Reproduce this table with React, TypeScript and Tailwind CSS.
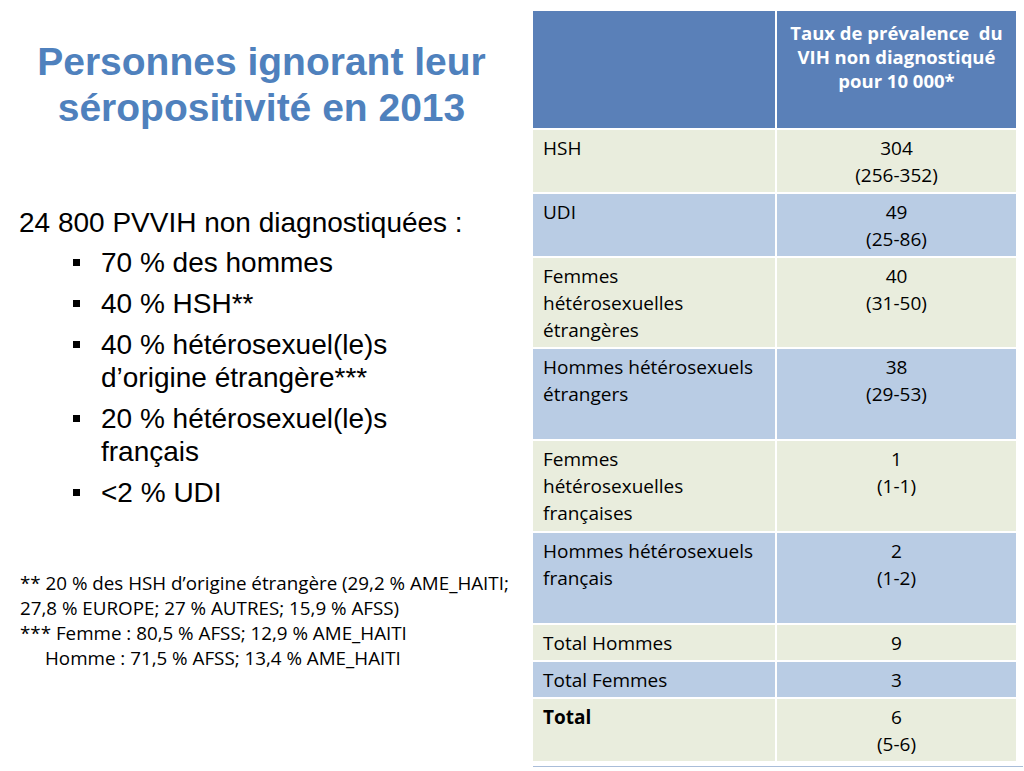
const rows = [
  { label: ['HSH'], value: ['304', '(256-352)'], bg: 'bg-[#e9eddd]', h: 'h-[62px]' },
  { label: ['UDI'], value: ['49', '(25-86)'], bg: 'bg-[#b9cce4]', h: 'h-[62px]' },
  { label: ['Femmes', 'hétérosexuelles', 'étrangères'], value: ['40', '(31-50)'], bg: 'bg-[#e9eddd]', h: 'h-[89px]' },
  { label: ['Hommes hétérosexuels', 'étrangers'], value: ['38', '(29-53)'], bg: 'bg-[#b9cce4]', h: 'h-[90px]' },
  { label: ['Femmes', 'hétérosexuelles', 'françaises'], value: ['1', '(1-1)'], bg: 'bg-[#e9eddd]', h: 'h-[90px]' },
  { label: ['Hommes hétérosexuels', 'français'], value: ['2', '(1-2)'], bg: 'bg-[#b9cce4]', h: 'h-[90px]' },
  { label: ['Total Hommes'], value: ['9'], bg: 'bg-[#e9eddd]', h: 'h-[35px]' },
  { label: ['Total Femmes'], value: ['3'], bg: 'bg-[#b9cce4]', h: 'h-[35px]' },
  { label: ['Total'], value: ['6', '(5-6)'], bg: 'bg-[#e9eddd]', h: 'h-[62px]', bold: true },
]

const bullets = [
  ['70 % des hommes'],
  ['40 % HSH**'],
  ['40 % hétérosexuel(le)s', 'd’origine étrangère***'],
  ['20 % hétérosexuel(le)s', 'français'],
  ['<2 % UDI'],
]

export default function App() {
  return (
    <div className="w-[1024px] h-[771px] bg-white flex overflow-hidden">
      {/* Left side */}
      <div className="w-[533px] flex flex-col font-['Liberation_Sans',Arial,sans-serif] text-black">
        <h1 className="mt-[39px] pr-[10px] text-center text-[39px] leading-[46px] font-bold text-[#4f81bd]">
          Personnes ignorant leur
          <br />
          séropositivité en 2013
        </h1>

        <p className="mt-[75px] ml-[19px] text-[28px] leading-[33px]">24 800 PVVIH non diagnostiquées :</p>
        <ul className="mt-[7px] ml-[73px] flex flex-col gap-[8px]">
          {bullets.map((b, i) => (
            <li key={i} className="flex text-[28px] leading-[33px]">
              <span className="w-[28px] shrink-0 flex items-center h-[33px]">
                <span className="w-[7px] h-[7px] bg-black" />
              </span>
              <span>
                {b.map((line, j) => (
                  <span key={j} className="block">{line}</span>
                ))}
              </span>
            </li>
          ))}
        </ul>

        <div className="mt-[62px] ml-[20px] font-['Open_Sans',sans-serif] text-[18.8px] leading-[25px]">
          <p>** 20 % des HSH d’origine étrangère (29,2 % AME_HAITI;</p>
          <p>27,8 % EUROPE; 27 % AUTRES; 15,9 % AFSS)</p>
          <p>*** Femme : 80,5 % AFSS; 12,9 % AME_HAITI</p>
          <p className="pl-[25px]">Homme : 71,5 % AFSS; 13,4 % AME_HAITI</p>
        </div>
      </div>

      {/* Table */}
      <div className="flex flex-col pt-[11px] font-['Open_Sans',sans-serif] text-black">
        <div className="grid grid-cols-[242px_239px] gap-[2px] w-[484px]">
          <div className="h-[117px] bg-[#5a80b8]" />
          <div className="h-[117px] bg-[#5a80b8] pt-[10px] text-center text-white font-bold text-[18.5px] leading-[24px]">
            Taux de prévalence&nbsp; du
            <br />
            VIH non diagnostiqué
            <br />
            pour 10 000*
          </div>
          {rows.map((r, i) => (
            <div key={i} className="contents">
              <div className={`${r.h} ${r.bg} pl-[10px] pt-[5px] text-[19px] leading-[27px] ${r.bold ? 'font-bold' : ''}`}>
                {r.label.map((l, j) => (
                  <div key={j}>{l}</div>
                ))}
              </div>
              <div className={`${r.h} ${r.bg} pt-[5px] text-center text-[19px] leading-[27px]`}>
                {r.value.map((v, j) => (
                  <div key={j}>{v}</div>
                ))}
              </div>
            </div>
          ))}
        </div>
        <div className="mt-[5px] h-[1px] w-[490px] bg-[#a9bdd9]" />
      </div>
    </div>
  )
}
